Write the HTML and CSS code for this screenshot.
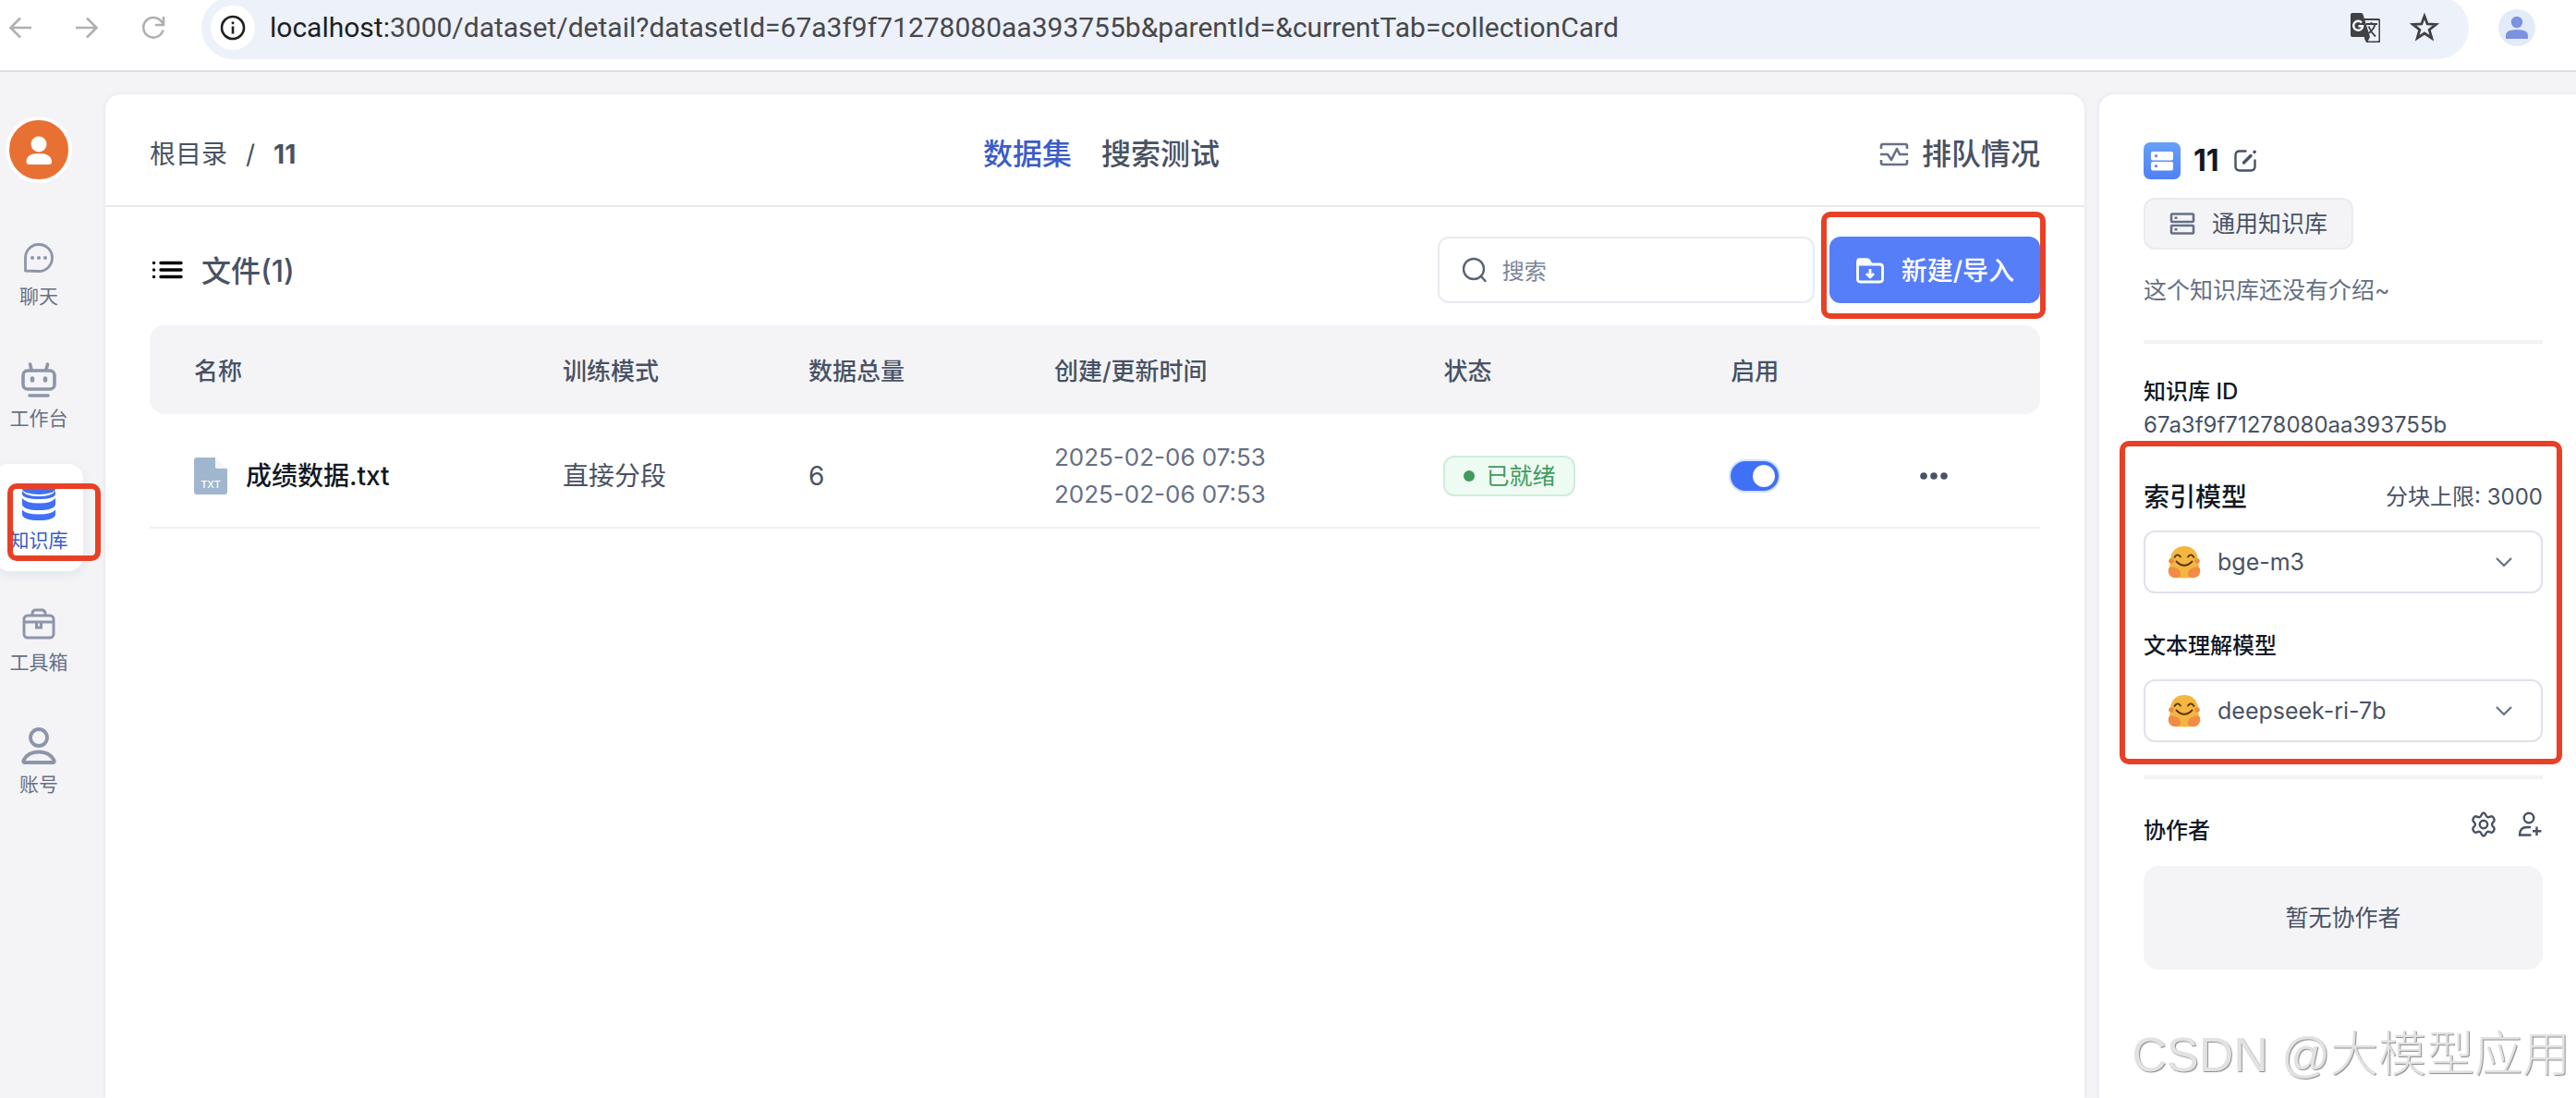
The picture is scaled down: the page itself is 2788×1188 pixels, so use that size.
FILE: index.html
```html
<!DOCTYPE html>
<html lang="zh-CN">
  <head>
    <meta charset="UTF-8" />
    <meta name="viewport" content="width=device-width, initial-scale=1.0" />
    <title>知识库 - 11</title>
    <link rel="stylesheet" href="styles.css" />
  </head>
  <body>
    <header class="toolbar">
      <div class="history">
        <button type="button" class="icon-btn" aria-label="后退">
          <svg width="28" height="28" viewBox="0 0 28 28" fill="none" stroke="#b0b0b0" stroke-width="2.6"><path d="M26 14H4M14 3.500L3.500 14L14 24.500" /></svg>
        </button>
        <button type="button" class="icon-btn" aria-label="前进">
          <svg width="28" height="28" viewBox="0 0 28 28" fill="none" stroke="#b0b0b0" stroke-width="2.6"><path d="M2 14H24M14 3.500L24.500 14L14 24.500" /></svg>
        </button>
        <button type="button" class="icon-btn" aria-label="刷新">
          <svg width="28" height="28" viewBox="0 0 28 28" fill="none" stroke="#b0b0b0" stroke-width="2.6"><path d="M24.500 16.500A10.800 10.800 0 1 1 22.500 7L25 10M25 2V11H16" /></svg>
        </button>
      </div>
      <div class="address">
        <span class="site-info">
          <svg width="28" height="28" viewBox="0 0 28 28" fill="none" stroke="#1f1f1f" stroke-width="2.6"><circle cx="14" cy="14" r="12" /><path d="M14 12.500V20.500M14 7.500V10.300" /></svg>
        </span>
        <span class="url"><b>localhost:</b>3000/dataset/detail?datasetId=67a3f9f71278080aa393755b&amp;parentId=&amp;currentTab=collectionCard</span>
        <button type="button" class="icon-btn" aria-label="翻译">
          <svg width="32" height="32" viewBox="0 0 32 32"><path d="M2 0H11.500Q13 0 13.500 1.500L21 26L18 32L15 26H2Q0 26 0 24V2Q0 0 2 0Z" fill="#3f4144" /><path d="M15 7H29.500Q31.500 7 31.500 9V29.500Q31.500 31.500 29.500 31.500H18L15.500 26.500" fill="none" stroke="#3f4144" stroke-width="2" /><path d="M17 12H29M22.500 10V12M26.500 12.500Q25 18 19.500 22M19.500 14.500Q22 21 27 25.500" fill="none" stroke="#3f4144" stroke-width="1.800" /><path d="M12 10.500A5 5 0 1 0 13.200 14.200H8.500" fill="none" stroke="#fff" stroke-width="2.400" /></svg>
        </button>
        <button type="button" class="icon-btn" aria-label="收藏">
          <svg width="32" height="32" viewBox="0 0 32 32" fill="none" stroke="#3f4144" stroke-width="2.800"><path d="M16 3.500L19.200 12L28.500 12.400L21.200 18.200L23.800 27.200L16 22L8.200 27.200L10.800 18.200L3.500 12.400L12.800 12Z" /></svg>
        </button>
      </div>
      <button type="button" class="icon-btn" aria-label="个人资料">
        <svg width="40" height="40" viewBox="0 0 40 40"><circle cx="20" cy="20" r="20" fill="#e3ebf8" /><circle cx="20" cy="14" r="6.200" fill="#7b93df" /><path d="M8 32V28Q8 22 20 22T32 28V32Z" fill="#7b93df" /></svg>
      </button>
    </header>

    <div class="app">
      <aside class="sidebar">
        <div class="avatar">
          <svg width="64" height="64" viewBox="0 0 64 64" fill="#fff"><circle cx="32" cy="26" r="8.500" /><path d="M18.500 45Q18.500 36 32 36T46 45Q46 48 43 48H21.500Q18.500 48 18.500 45Z" /></svg>
        </div>
        <nav class="nav">
          <a href="#" class="nav-item">
            <svg width="40" height="40" viewBox="0 0 40 40" fill="none" stroke="#8c95aa" stroke-width="2.800"><path d="M5.500 34V20.500A14.500 14.500 0 1 1 20 34.500Z" stroke-linejoin="round" /><g fill="#8c95aa" stroke="none"><circle cx="13" cy="20" r="2" /><circle cx="20" cy="20" r="2" /><circle cx="27" cy="20" r="2" /></g></svg>
            聊天
          </a>
          <a href="#" class="nav-item">
            <svg width="40" height="40" viewBox="0 0 40 40" fill="none" stroke="#8c95aa" stroke-width="3.600" stroke-linecap="round"><rect x="3" y="10" width="34" height="20" rx="5" /><path d="M10.500 3L12 9M29.500 3L28 9M10 37H30" /><path d="M13 18.500V20.500M27 18.500V20.500" stroke-width="4.500" /></svg>
            工作台
          </a>
          <a href="#" class="nav-item active">
            <svg width="40" height="40" viewBox="0 0 40 40" fill="#4070f5"><ellipse cx="20" cy="6" rx="18" ry="6" /><path d="M2 8Q6 14 20 14T38 8V12Q36 17 20 17T2 12Z" /><path d="M2 16Q6 21.500 20 21.500T38 16V23Q36 29 20 29T2 23Z" /><path d="M2 28.500Q6 33.500 20 33.500T38 28.500V34Q36 40 20 40T2 34Z" /></svg>
            知识库
          </a>
          <a href="#" class="nav-item">
            <svg width="40" height="40" viewBox="0 0 40 40" fill="none" stroke="#8c95aa" stroke-width="3"><rect x="4" y="11" width="32" height="24" rx="4" /><path d="M13 11V9Q13 5 17 5H23Q27 5 27 9V11M4 18H36M17.500 18V24H22.500V18" /></svg>
            工具箱
          </a>
          <a href="#" class="nav-item">
            <svg width="40" height="40" viewBox="0 0 40 40" fill="none" stroke="#8c95aa" stroke-width="3.800" stroke-linejoin="round"><circle cx="20" cy="11" r="9" /><path d="M4 38Q3 38 3.500 35.500C7 29 13 26.500 20 26.500S33 29 36.500 35.500Q37 38 36 38Z" /></svg>
            账号
          </a>
        </nav>
        <div class="mark mark-nav"></div>
      </aside>

      <main class="card">
        <div class="card-head">
          <div class="breadcrumb">
            <a href="#">根目录</a>
            <span>/</span>
            <strong>11</strong>
          </div>
          <nav class="tabs">
            <a href="#" class="active">数据集</a>
            <a href="#">搜索测试</a>
          </nav>
          <button type="button" class="queue">
            <svg width="32" height="32" viewBox="0 0 32 32" fill="none" stroke="#667085" stroke-width="2.600" stroke-linejoin="round"><path d="M2 10V7Q2 5 4 5H28Q30 5 30 7V10M2 22V25Q2 27 4 27H28Q30 27 30 25V22" /><path d="M1 16H9L13 22L19 10L22 16H31" /></svg>
            排队情况
          </button>
        </div>

        <div class="card-body">
          <div class="actions">
            <svg width="36" height="24" viewBox="0 0 36 24" fill="none" stroke="#000" stroke-width="3.400" stroke-linecap="round"><path d="M12 4.500H34M12 12H34M12 19.500H34" /><path d="M4.500 4.500H4.600M4.500 12H4.600M4.500 19.500H4.600" /></svg>
            <h1>文件(1)</h1>
            <label class="search">
              <svg width="28" height="28" viewBox="0 0 28 28" fill="none" stroke="#596275" stroke-width="2.400" stroke-linecap="round"><circle cx="13" cy="13" r="11" /><path d="M21 21L25.500 26" /></svg>
              <input type="text" placeholder="搜索" aria-label="搜索" />
            </label>
            <div class="import-wrap">
              <button type="button" class="import">
                <svg width="32" height="32" viewBox="0 0 32 32" fill="none" stroke="#fff" stroke-width="2.800" stroke-linejoin="round"><path d="M2.500 8V25Q2.500 28 5.500 28H26.500Q29.500 28 29.500 25V12Q29.500 9 26.500 9H17L15 5Q14.500 4 13 4H5.500Q2.500 4 2.500 7Z" /><path d="M3 4H13.500L16 9H3Z" fill="#fff" /><path d="M16 14V22M12 19L16 23L20 19" /></svg>
                新建/导入
              </button>
              <div class="mark mark-import"></div>
            </div>
          </div>

          <table class="files">
            <colgroup>
              <col class="col-name" />
              <col class="col-mode" />
              <col class="col-count" />
              <col class="col-time" />
              <col class="col-status" />
              <col class="col-enable" />
              <col />
            </colgroup>
            <thead>
              <tr>
                <th>名称</th>
                <th>训练模式</th>
                <th>数据总量</th>
                <th>创建/更新时间</th>
                <th>状态</th>
                <th>启用</th>
                <th></th>
              </tr>
            </thead>
            <tbody>
              <tr>
                <td>
                  <div class="file-name">
                    <svg width="36" height="40" viewBox="0 0 36 40"><path d="M3 0H23V9Q23 12 26 12H36V37Q36 40 33 40H3Q0 40 0 37V3Q0 0 3 0Z" fill="#a0b6cf" /><path d="M23 0L36 12H26Q23 12 23 9Z" fill="#f4f6f9" /><text x="18" y="33" text-anchor="middle" class="file-ext">TXT</text></svg>
                    成绩数据.txt
                  </div>
                </td>
                <td>直接分段</td>
                <td>6</td>
                <td class="time">2025-02-06 07:53<br />2025-02-06 07:53</td>
                <td><span class="badge">已就绪</span></td>
                <td><input type="checkbox" class="switch" aria-label="启用" checked /></td>
                <td>
                  <button type="button" class="icon-btn" aria-label="更多">
                    <svg width="30" height="28" viewBox="0 0 30 28" fill="#485264"><circle cx="4" cy="14" r="3.800" /><circle cx="15" cy="14" r="3.800" /><circle cx="26" cy="14" r="3.800" /></svg>
                  </button>
                </td>
              </tr>
            </tbody>
          </table>
        </div>
      </main>

      <aside class="panel">
        <div class="panel-title">
          <svg width="40" height="40" viewBox="0 0 40 40"><defs><linearGradient id="base" x1="0" y1="0" x2="0" y2="1"><stop offset="0" stop-color="#67a0f8" /><stop offset="1" stop-color="#4f80f6" /></linearGradient></defs><rect width="40" height="40" rx="7" fill="url(#base)" /><rect x="8" y="10" width="24" height="9.500" rx="2" fill="#fff" /><rect x="8" y="21" width="24" height="9.500" rx="2" fill="#fff" /><circle cx="13.500" cy="14.700" r="1.600" fill="#6a85e8" /><circle cx="13.500" cy="25.700" r="1.600" fill="#6a85e8" /></svg>
          <h2>11</h2>
          <button type="button" class="icon-btn" aria-label="编辑">
            <svg width="28" height="28" viewBox="0 0 28 28" fill="none" stroke="#485264" stroke-width="2.400" stroke-linecap="round"><path d="M14.500 3.500H8Q3.500 3.500 3.500 8V20Q3.500 24.500 8 24.500H20Q24.500 24.500 24.500 20V13.500" /><path d="M12.500 16L20 8.500M24 4.500L24.200 4.300" stroke-width="3.400" /></svg>
          </button>
        </div>
        <div class="tag">
          <svg width="28" height="28" viewBox="0 0 28 28" fill="none" stroke="#667085" stroke-width="2.600"><rect x="2" y="3.500" width="24" height="8.500" rx="1" /><rect x="2" y="16" width="24" height="8.500" rx="1" /><path d="M5.500 7.700H8.500M5.500 20.200H8.500" /></svg>
          通用知识库
        </div>
        <p class="intro">这个知识库还没有介绍~</p>
        <hr />
        <h3 class="id-title">知识库 ID</h3>
        <p class="dataset-id">67a3f9f71278080aa393755b</p>

        <div class="models">
          <div class="model-head">
            <label for="index-model" class="large">索引模型</label>
            <span>分块上限: 3000</span>
          </div>
          <div class="select">
            <svg width="36" height="36" viewBox="0 0 36 36"><use href="#hug" /></svg>
            <select id="index-model">
              <option>bge-m3</option>
            </select>
            <svg width="24" height="24" viewBox="0 0 24 24" fill="none" stroke="#667085" stroke-width="2.200"><path d="M4 8L12 16L20 8" /></svg>
          </div>
          <div class="model-head">
            <label for="text-model">文本理解模型</label>
          </div>
          <div class="select">
            <svg width="36" height="36" viewBox="0 0 36 36"><use href="#hug" /></svg>
            <select id="text-model">
              <option>deepseek-ri-7b</option>
            </select>
            <svg width="24" height="24" viewBox="0 0 24 24" fill="none" stroke="#667085" stroke-width="2.200"><path d="M4 8L12 16L20 8" /></svg>
          </div>
          <div class="mark mark-models"></div>
        </div>
        <hr />

        <div class="members-head">
          <h3>协作者</h3>
          <button type="button" class="icon-btn" aria-label="设置">
            <svg width="28" height="28" viewBox="0 0 28 28" fill="none" stroke="#485264" stroke-width="2.400" stroke-linejoin="round"><path d="M14 1.500C16.500 1.500 16 5 18 6S22 4.500 23.500 5.500S26 9 25.500 10S23 12 23 14S25 17 25.500 18S25 21.500 23.500 22.500S20 21 18 22S16.500 26.500 14 26.500S12 23 10 22S6 23.500 4.500 22.500S2 19 2.500 18S5 16 5 14S3 11 2.500 10S3 6.500 4.500 5.500S8 7 10 6S11.500 1.500 14 1.500Z" /><circle cx="14" cy="14" r="4.200" /></svg>
          </button>
          <button type="button" class="icon-btn" aria-label="添加协作者">
            <svg width="28" height="28" viewBox="0 0 28 28" fill="none" stroke="#485264" stroke-width="2.400"><circle cx="13" cy="7" r="5.300" /><path d="M15 17H11Q3 17 3 25.500H15.500M21.500 16.500V26M17 21.200H26.500" /></svg>
          </button>
        </div>
        <div class="empty">暂无协作者</div>
      </aside>
    </div>

    <div class="watermark">CSDN @大模型应用</div>

    <svg class="sprite" width="0" height="0" aria-hidden="true">
      <symbol id="hug" viewBox="0 0 36 36">
        <path d="M3 17C3 7 9 1 18 1S33 7 33 17L34 24L33 33Q28 35.500 18 35.500T3 33L2 24Z" fill="#f3b73f" />
        <circle cx="4" cy="17" r="2.800" fill="#f08a45" />
        <circle cx="32" cy="17" r="2.800" fill="#f08a45" />
        <path d="M1 25Q4 22 7 24Q13 25 14 30Q15 34 11 35Q5 36 2 32Q0 29 1 25ZM35 25Q32 22 29 24Q23 25 22 30Q21 34 25 35Q31 36 34 32Q36 29 35 25Z" fill="#f28c45" />
        <path d="M7.500 13Q10.500 8 14 12.500M22 12.500Q25.500 8 28.500 13M9.500 17.500Q18 26 26.500 17.500" fill="none" stroke="#553018" stroke-width="1.800" stroke-linecap="round" />
      </symbol>
    </svg>
  </body>
</html>
```
FILE: styles.css
```css
* {
  box-sizing: border-box;
}

body {
  display: flex;
  flex-direction: column;
  min-height: 100vh;
  margin: 0;
  position: relative;
  overflow: hidden;
  background-color: #f4f4f7;
  color: #485264;
  font-family: Inter, "Noto Sans CJK SC", sans-serif;
  font-size: 25px;
  line-height: 36px;
}

svg {
  display: block;
  flex-shrink: 0;
}

a {
  color: inherit;
  text-decoration: none;
}

button,
input,
select {
  padding: 0;
  border: none;
  background: none;
  color: inherit;
  font: inherit;
}

button {
  cursor: pointer;
}

.icon-btn {
  display: flex;
}

h1,
h2,
h3,
p {
  margin: 0;
}

/* browser toolbar */
.toolbar {
  display: flex;
  align-items: center;
  height: 78px;
  padding: 0 44px 16px 8px;
  background-color: #fff;
  border-bottom: 2px solid #dcdddf;
}

.history {
  display: flex;
  gap: 44px;
}

.address {
  display: flex;
  flex: 1;
  align-items: center;
  gap: 32px;
  height: 68px;
  margin: 0 32px 0 38px;
  padding: 0 32px 0 10px;
  border-radius: 34px;
  background-color: #edf1f9;
}

.site-info {
  display: flex;
  align-items: center;
  justify-content: center;
  width: 48px;
  height: 48px;
  margin-right: -16px;
  border-radius: 50%;
  background-color: #fff;
}

.url {
  flex: 1;
  color: #46484c;
  font-family: Roboto, "Liberation Sans", sans-serif;
  font-size: 30px;
}

.url b {
  color: #1f1f1f;
  font-weight: normal;
}

/* layout */
.app {
  display: flex;
  flex: 1;
}

.sidebar {
  position: relative;
  width: 114px;
  padding-top: 48px;
}

.avatar {
  width: 72px;
  height: 72px;
  margin-left: 6px;
  border: 4px solid #fff;
  border-radius: 50%;
  background-color: #e87033;
}

.nav {
  display: flex;
  flex-direction: column;
  gap: 16px;
  width: 96px;
  margin: 40px 0 0 -6px;
}

.nav-item {
  display: flex;
  flex-direction: column;
  align-items: center;
  gap: 8px;
  height: 116px;
  padding-top: 21px;
  border-radius: 16px;
  color: #667085;
  font-size: 21px;
  line-height: 28px;
}

.nav-item.active {
  background-color: #fff;
  box-shadow: 0 4px 12px rgba(19, 51, 107, 0.08);
  color: #3c5cc8;
}

.card {
  flex: 1;
  margin-top: 24px;
  border-top-left-radius: 16px;
  border-top-right-radius: 16px;
  background-color: #fff;
  box-shadow: 0 0 4px rgba(19, 51, 107, 0.1);
}

.card-head {
  display: grid;
  grid-template-columns: 1fr auto 1fr;
  align-items: center;
  height: 122px;
  padding: 10px 48px 0;
  border-bottom: 2px solid #e8e9ec;
}

.breadcrumb {
  display: flex;
  gap: 20px;
  font-size: 28px;
}

.breadcrumb strong {
  font-weight: 700;
}

.tabs {
  display: flex;
  gap: 32px;
  padding-left: 14px;
  font-size: 32px;
  font-weight: 500;
}

.tabs .active {
  color: #3c5cc8;
}

.queue {
  display: flex;
  align-items: center;
  justify-self: end;
  gap: 14px;
  font-size: 32px;
  font-weight: 500;
}

.card-body {
  padding: 32px 48px;
}

.actions {
  display: flex;
  align-items: center;
  margin-bottom: 24px;
}

.actions h1 {
  flex: 1;
  margin-left: 20px;
  padding-top: 4px;
  font-size: 32px;
  font-weight: 500;
}

.search {
  display: flex;
  align-items: center;
  gap: 16px;
  width: 408px;
  height: 72px;
  padding: 0 24px;
  border: 2px solid #e8ebf0;
  border-radius: 12px;
}

.search input {
  flex: 1;
  min-width: 0;
  padding-top: 4px;
  outline: none;
  font-size: 24px;
}

.search input::placeholder {
  color: #7c8598;
}

.import-wrap {
  position: relative;
  margin-left: 16px;
}

.import {
  display: flex;
  align-items: center;
  gap: 18px;
  height: 72px;
  padding: 2px 28px 0;
  border-radius: 12px;
  background-color: #557ef8;
  color: #fff;
  font-size: 28px;
  font-weight: 500;
}

/* file table */
.files {
  width: 100%;
  table-layout: fixed;
  border-spacing: 0;
  text-align: left;
}

.files th {
  height: 96px;
  padding: 4px 0 0 48px;
  background-color: #f4f4f7;
  font-size: 26px;
  font-weight: 500;
}

.files th:first-child {
  border-radius: 16px 0 0 16px;
}

.files th:last-child {
  border-radius: 0 16px 16px 0;
}

.files td {
  height: 124px;
  padding: 12px 0 0 48px;
  border-bottom: 2px solid #f0f1f4;
  font-size: 28px;
}

.col-name {
  width: 19.5%;
}

.col-mode,
.col-count {
  width: 13%;
}

.col-time {
  width: 20.6%;
}

.col-status {
  width: 15.2%;
}

.col-enable {
  width: 10%;
}

.file-name {
  display: flex;
  align-items: center;
  gap: 20px;
  color: #111824;
  font-weight: 500;
}

.file-ext {
  fill: #fff;
  font-size: 11px;
}

.files .time {
  color: #667085;
  font-size: 26px;
  line-height: 40px;
}

.badge {
  display: inline-flex;
  align-items: center;
  gap: 12px;
  height: 44px;
  padding: 0 20px;
  border: 2px solid #cdeed8;
  border-radius: 12px;
  background-color: #edfbf3;
  color: #409b5d;
  font-size: 25px;
}

.badge::before {
  content: "";
  width: 12px;
  height: 12px;
  border-radius: 50%;
  background-color: #409b5d;
}

.switch {
  display: flex;
  justify-content: flex-end;
  align-items: center;
  appearance: none;
  width: 52px;
  height: 32px;
  margin: 0;
  padding: 4px;
  border-radius: 16px;
  background-color: #4070f5;
  box-shadow: 0 0 0 2px #d3e3f8;
  cursor: pointer;
}

.switch::before {
  content: "";
  width: 24px;
  height: 24px;
  border-radius: 50%;
  background-color: #fff;
}

.switch:not(:checked) {
  justify-content: flex-start;
  background-color: #c4cbd7;
}

/* details panel */
.panel {
  width: 516px;
  margin: 24px 0 0 16px;
  padding: 52px 36px 0 48px;
  border-top-left-radius: 16px;
  background-color: #fff;
  box-shadow: 0 0 4px rgba(19, 51, 107, 0.1);
}

.panel-title {
  display: flex;
  align-items: center;
  gap: 14px;
  margin-bottom: 20px;
}

.panel h2 {
  color: #111824;
  font-size: 32px;
  font-weight: 700;
}

.tag {
  display: inline-flex;
  align-items: center;
  gap: 18px;
  height: 56px;
  padding: 0 26px;
  border: 2px solid #e8ebf0;
  border-radius: 12px;
  background-color: #f4f4f7;
}

.intro {
  margin-top: 26px;
  color: #667085;
}

.panel hr {
  height: 4px;
  margin: 36px 0 24px;
  border: none;
  background-color: #f3f3f6;
}

.panel h3,
.models label {
  color: #111824;
  font-size: 24px;
  font-weight: 500;
}

.panel .id-title {
  margin-top: 34px;
}

.dataset-id {
  font-size: 24px;
}

.models .large {
  font-size: 28px;
}

.models {
  position: relative;
  margin-top: 42px;
}

.model-head {
  display: flex;
  align-items: center;
  justify-content: space-between;
  margin-bottom: 18px;
  font-size: 24px;
}

.select {
  display: flex;
  align-items: center;
  gap: 18px;
  height: 68px;
  padding: 0 28px 0 24px;
  border: 2px solid #dfe2ea;
  border-radius: 12px;
}

.select select {
  flex: 1;
  appearance: none;
  outline: none;
  font-size: 25px;
}

.select + .model-head {
  margin-top: 39px;
}

.members-head {
  display: flex;
  align-items: center;
  gap: 22px;
  margin-bottom: 20px;
}

.members-head h3 {
  flex: 1;
  padding-top: 14px;
}

.empty {
  padding: 38px 0;
  border-radius: 16px;
  background-color: #f4f4f7;
  text-align: center;
}

/* red highlight frames over the interface */
.mark {
  position: absolute;
  border: 6px solid #e84026;
  border-radius: 10px;
  pointer-events: none;
}

.mark-nav {
  top: 445px;
  left: 8px;
  width: 101px;
  height: 84px;
}

.mark-import {
  inset: -27px -6px -17px -9px;
}

.mark-models {
  inset: -43px -21px -24px -26px;
}

.watermark {
  position: absolute;
  right: 6px;
  bottom: 12px;
  color: #e2e2e2;
  font-family: "Liberation Sans", "Noto Sans CJK SC", sans-serif;
  font-size: 52px;
  font-weight: 300;
  line-height: 70px;
  text-shadow: 1px 1px 1px #8a8a8a;
}

.sprite {
  position: absolute;
}
```
